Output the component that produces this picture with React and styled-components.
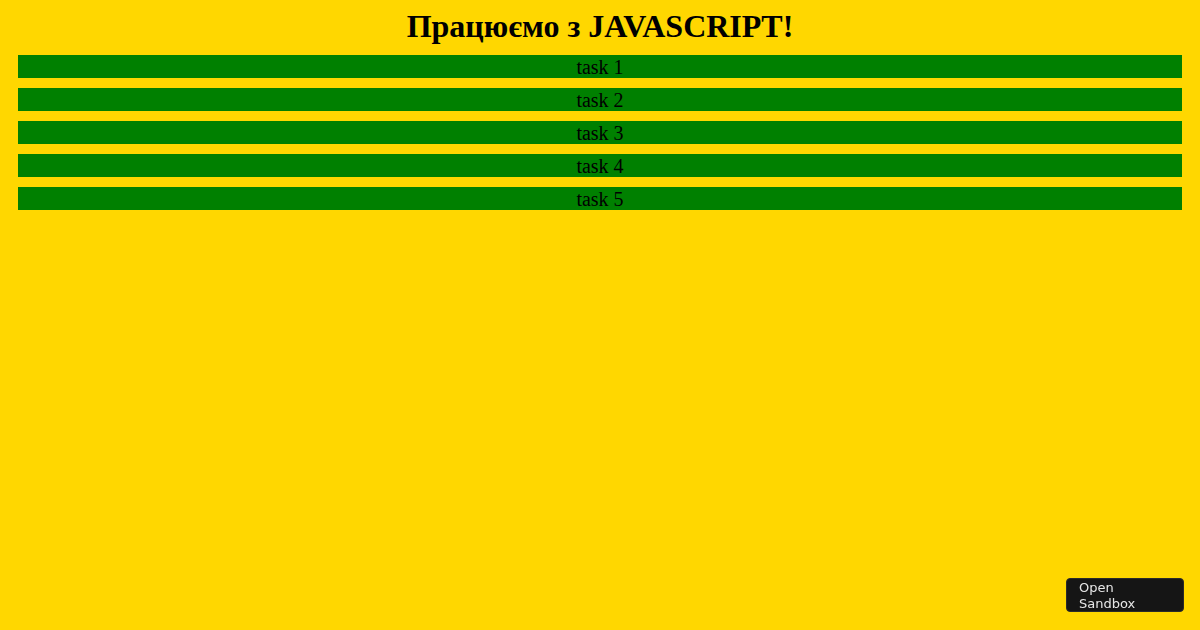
import React from "react";
import styled, { createGlobalStyle } from "styled-components";

const Global = createGlobalStyle`
  html, body { margin: 0; padding: 0; background: #ffd700; }
  body { font-family: "Liberation Serif", "Times New Roman", serif; }
`;

const Page = styled.div`
  min-height: 630px;
  padding: 8px 18px;
  box-sizing: border-box;
  background: #ffd700;
  display: flex;
  flex-direction: column;
`;

const Title = styled.h1`
  margin: 0 0 10px;
  font-size: 32px;
  line-height: 37px;
  font-weight: bold;
  text-align: center;
  color: #000;
`;

const List = styled.div`
  display: flex;
  flex-direction: column;
  gap: 10px;
`;

const Task = styled.div`
  background: #008000;
  height: 23px;
  line-height: 25px;
  overflow: hidden;
  font-size: 20px;
  text-align: center;
  color: #000;
`;

const SandboxButton = styled.button`
  position: fixed;
  right: 16px;
  bottom: 18px;
  width: 118px;
  height: 34px;
  padding: 1px 12px;
  box-sizing: border-box;
  background: #151515;
  color: #e6e6e6;
  border: 1px solid #2a2a2a;
  border-radius: 4px;
  font-family: "DejaVu Sans", sans-serif;
  font-size: 13px;
  line-height: 16px;
  text-align: left;
  cursor: pointer;
`;

export default function App() {
  const tasks = ["task 1", "task 2", "task 3", "task 4", "task 5"];
  return (
    <>
      <Global />
      <Page>
        <Title>Працюємо з JAVASCRIPT!</Title>
        <List>
          {tasks.map((t) => (
            <Task key={t}>{t}</Task>
          ))}
        </List>
      </Page>
      <SandboxButton>Open<br />Sandbox</SandboxButton>
    </>
  );
}
